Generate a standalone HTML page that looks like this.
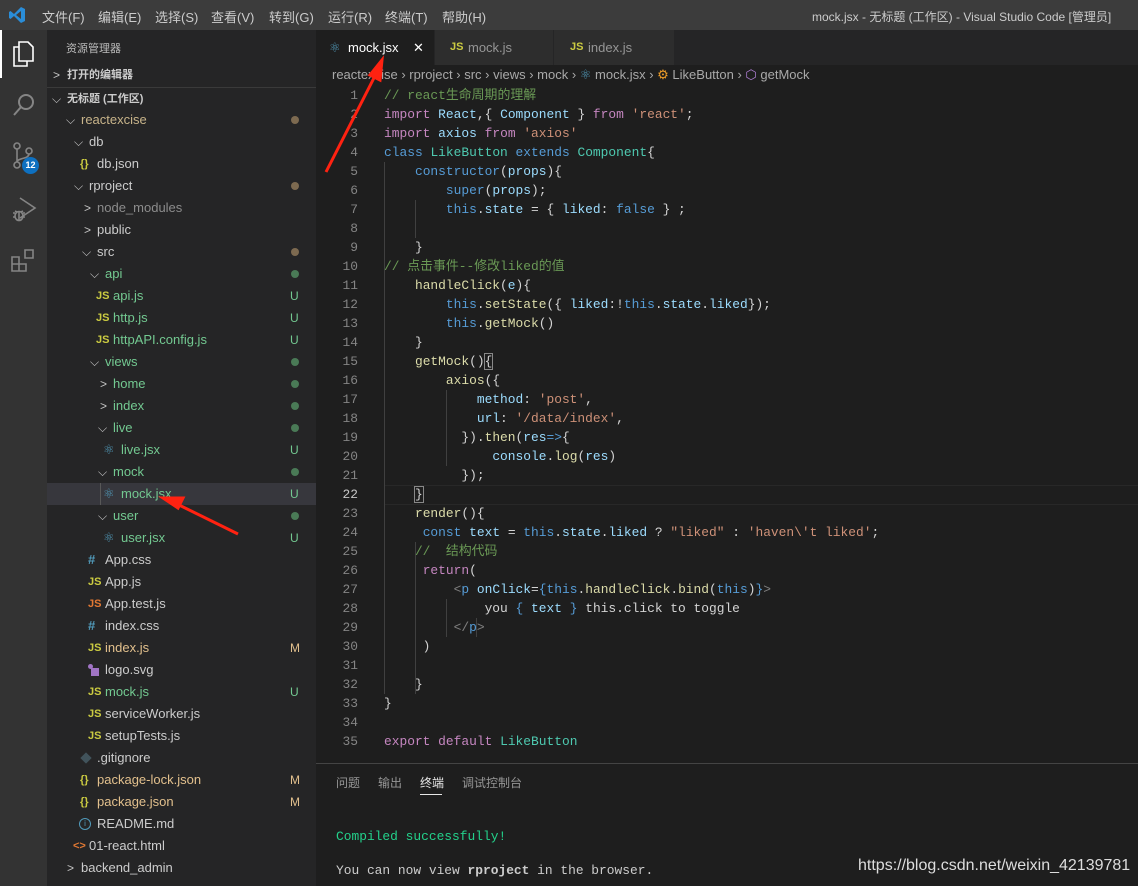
<!DOCTYPE html>
<html><head><meta charset="utf-8"><style>
*{margin:0;padding:0;box-sizing:border-box}
body{width:1138px;height:886px;overflow:hidden;background:#1e1e1e;font-family:"Liberation Sans","Noto Sans CJK SC",sans-serif;font-size:13px;color:#ccc;position:relative}
.abs{position:absolute}
#title{left:0;top:0;width:1138px;height:30px;background:#3c3c3c}
#title span{position:absolute;top:7px;font-size:13px;color:#ccc}
#act{left:0;top:30px;width:47px;height:856px;background:#333}
#side{left:47px;top:30px;width:269px;height:856px;background:#252526}
.row{position:absolute;left:47px;width:269px;height:22px;line-height:22px;white-space:nowrap}
.row .t{position:absolute;top:0}
.row .c{position:absolute;top:0;color:#c5c5c5;font-size:12px}
.row .i{position:absolute;top:0;font-size:11px;font-weight:bold}
.row .s{position:absolute;left:243px;top:0;font-size:12px}
.row .d{position:absolute;left:244px;top:7px;width:8px;height:8px;border-radius:50%}
.g{color:#73c991}.m{color:#e2c08d}.gr{color:#8c8c8c}
.dg{background:#4a7a56}.db{background:#7d6a50}
#tabs{left:316px;top:30px;width:822px;height:35px;background:#252526}
.tab{position:absolute;top:0;height:35px;line-height:35px;background:#2d2d2d;color:#969696;font-size:13px}
#code{left:316px;top:86px;font-family:"Liberation Mono","Noto Sans CJK SC",monospace;font-size:12.9px}
.ln{position:absolute;left:0;width:42px;text-align:right;color:#858585;height:19px;line-height:19px}
.cl{position:absolute;left:68px;height:19px;line-height:19px;white-space:pre;color:#d4d4d4}
.k{color:#c586c0}.v{color:#9cdcfe}.cn{color:#4ec9b0}.s1{color:#ce9178}.cm{color:#6a9955}.f{color:#dcdcaa}.b{color:#569cd6}.gy{color:#808080}
.guide{position:absolute;width:1px;background:#404040}
</style></head><body>
<div id="title" class="abs">
<svg class="abs" style="left:8px;top:6px" width="18" height="18" viewBox="0 0 18 18"><path d="M13 1L6 8 2.5 5 1 6v6l1.5 1L6 10l7 7 4-2V3z M13 5v8L8 9z" fill="#2a8dd8" fill-rule="evenodd"/></svg>
<span style="left:42px">文件(F)</span><span style="left:98px">编辑(E)</span><span style="left:155px">选择(S)</span><span style="left:211px">查看(V)</span><span style="left:269px">转到(G)</span><span style="left:328px">运行(R)</span><span style="left:385px">终端(T)</span><span style="left:442px">帮助(H)</span>
<span style="left:812px;font-size:12px;top:8px">mock.jsx - 无标题 (工作区) - Visual Studio Code [管理员]</span>
</div>
<div id="act" class="abs">
<div class="abs" style="left:0;top:0;width:2px;height:48px;background:#fff"></div>
<svg class="abs" style="left:11px;top:10px" width="26" height="28" viewBox="0 0 26 28" fill="none" stroke="#fff" stroke-width="1.6"><path d="M8 2h9l5 5v14H8z"/><path d="M8 7H3v19h13v-5"/></svg>
<svg class="abs" style="left:11px;top:62px" width="26" height="26" viewBox="0 0 26 26" fill="none" stroke="#858585" stroke-width="2"><circle cx="15" cy="10" r="7"/><path d="M10 15L3 23"/></svg>
<svg class="abs" style="left:12px;top:112px" width="24" height="28" viewBox="0 0 24 28" fill="none" stroke="#858585" stroke-width="1.6"><circle cx="5" cy="4" r="3"/><circle cx="5" cy="23" r="3"/><circle cx="17" cy="9" r="3"/><path d="M5 7v13M17 12c0 5-12 4-12 8"/></svg>
<div class="abs" style="left:22px;top:127px;width:17px;height:17px;border-radius:50%;background:#0e70c0;color:#fff;font-size:9px;line-height:17px;text-align:center;font-weight:bold">12</div>
<svg class="abs" style="left:10px;top:165px" width="28" height="28" viewBox="0 0 28 28" fill="none" stroke="#858585" stroke-width="1.6"><path d="M10 3l15 10-15 10"/><ellipse cx="9" cy="21" rx="4" ry="4.5"/><path d="M3 18h2M3 22h2M13 18h2M13 22h2M5 16l2 1M13 16l-2 1M9 17v8"/></svg>
<svg class="abs" style="left:10px;top:218px" width="26" height="26" viewBox="0 0 26 26" fill="none" stroke="#858585" stroke-width="1.6"><path d="M2 9h7v7H2zM9 16h7v7H9zM2 16h7v7H2zM15 2h8v8h-8z"/></svg>
</div>
<div id="side" class="abs"></div>
<div class="abs" style="left:66px;top:40px;font-size:11px;color:#bbb">资源管理器</div>
<div class="row" style="top:64px"><span class="c" style="left:6px">&gt;</span><span class="t" style="left:20px;font-size:11px;font-weight:bold;color:#ccc">打开的编辑器</span></div>
<div class="row" style="top:87px;border-top:1px solid #3a3a3a"><span class="c" style="left:5px">⌵</span><span class="t" style="left:20px;font-size:11px;font-weight:bold;color:#ccc">无标题 (工作区)</span></div>

<div class="row" style="top:109px"><span class="c" style="left:19px">⌵</span><span class="t" style="left:34px;color:#c8b48a">reactexcise</span><span class="d db"></span></div>
<div class="row" style="top:131px"><span class="c" style="left:27px">⌵</span><span class="t" style="left:42px">db</span></div>
<div class="row" style="top:153px"><span class="i" style="left:33px;color:#cbcb41">{}</span><span class="t" style="left:50px">db.json</span></div>
<div class="row" style="top:175px"><span class="c" style="left:27px">⌵</span><span class="t" style="left:42px">rproject</span><span class="d db"></span></div>
<div class="row" style="top:197px"><span class="c" style="left:37px">&gt;</span><span class="t gr" style="left:50px">node_modules</span></div>
<div class="row" style="top:219px"><span class="c" style="left:37px">&gt;</span><span class="t" style="left:50px">public</span></div>
<div class="row" style="top:241px"><span class="c" style="left:35px">⌵</span><span class="t" style="left:50px">src</span><span class="d db"></span></div>
<div class="row" style="top:263px"><span class="c" style="left:43px">⌵</span><span class="t g" style="left:58px">api</span><span class="d dg"></span></div>
<div class="row" style="top:285px"><span class="i" style="left:49px;color:#cbcb41">JS</span><span class="t g" style="left:66px">api.js</span><span class="s g">U</span></div>
<div class="row" style="top:307px"><span class="i" style="left:49px;color:#cbcb41">JS</span><span class="t g" style="left:66px">http.js</span><span class="s g">U</span></div>
<div class="row" style="top:329px"><span class="i" style="left:49px;color:#cbcb41">JS</span><span class="t g" style="left:66px">httpAPI.config.js</span><span class="s g">U</span></div>
<div class="row" style="top:351px"><span class="c" style="left:43px">⌵</span><span class="t g" style="left:58px">views</span><span class="d dg"></span></div>
<div class="row" style="top:373px"><span class="c" style="left:53px">&gt;</span><span class="t g" style="left:66px">home</span><span class="d dg"></span></div>
<div class="row" style="top:395px"><span class="c" style="left:53px">&gt;</span><span class="t g" style="left:66px">index</span><span class="d dg"></span></div>
<div class="row" style="top:417px"><span class="c" style="left:51px">⌵</span><span class="t g" style="left:66px">live</span><span class="d dg"></span></div>
<div class="row" style="top:439px"><span class="i" style="left:56px;color:#519aba;font-weight:normal;font-size:13px">⚛</span><span class="t g" style="left:74px">live.jsx</span><span class="s g">U</span></div>
<div class="row" style="top:461px"><span class="c" style="left:51px">⌵</span><span class="t g" style="left:66px">mock</span><span class="d dg"></span></div>
<div class="row" style="top:483px;background:#37373d"><span class="abs" style="left:53px;top:0;width:1px;height:22px;background:#585858"></span><span class="i" style="left:56px;color:#519aba;font-weight:normal;font-size:13px">⚛</span><span class="t g" style="left:74px">mock.jsx</span><span class="s g">U</span></div>
<div class="row" style="top:505px"><span class="c" style="left:51px">⌵</span><span class="t g" style="left:66px">user</span><span class="d dg"></span></div>
<div class="row" style="top:527px"><span class="i" style="left:56px;color:#519aba;font-weight:normal;font-size:13px">⚛</span><span class="t g" style="left:74px">user.jsx</span><span class="s g">U</span></div>
<div class="row" style="top:549px"><span class="i" style="left:41px;color:#519aba;font-size:13px">#</span><span class="t" style="left:58px">App.css</span></div>
<div class="row" style="top:571px"><span class="i" style="left:41px;color:#cbcb41">JS</span><span class="t" style="left:58px">App.js</span></div>
<div class="row" style="top:593px"><span class="i" style="left:41px;color:#e37933">JS</span><span class="t" style="left:58px">App.test.js</span></div>
<div class="row" style="top:615px"><span class="i" style="left:41px;color:#519aba;font-size:13px">#</span><span class="t" style="left:58px">index.css</span></div>
<div class="row" style="top:637px"><span class="i" style="left:41px;color:#cbcb41">JS</span><span class="t m" style="left:58px">index.js</span><span class="s m">M</span></div>
<div class="row" style="top:659px"><span class="abs" style="left:41px;top:5px;width:5px;height:5px;border-radius:50%;background:#a074c4"></span><span class="abs" style="left:44px;top:9px;width:8px;height:8px;background:#a074c4"></span><span class="t" style="left:58px">logo.svg</span></div>
<div class="row" style="top:681px"><span class="i" style="left:41px;color:#cbcb41">JS</span><span class="t g" style="left:58px">mock.js</span><span class="s g">U</span></div>
<div class="row" style="top:703px"><span class="i" style="left:41px;color:#cbcb41">JS</span><span class="t" style="left:58px">serviceWorker.js</span></div>
<div class="row" style="top:725px"><span class="i" style="left:41px;color:#cbcb41">JS</span><span class="t" style="left:58px">setupTests.js</span></div>
<div class="row" style="top:747px"><span class="abs" style="left:35px;top:7px;width:8px;height:8px;background:#41535b;transform:rotate(45deg)"></span><span class="t" style="left:50px">.gitignore</span></div>
<div class="row" style="top:769px"><span class="i" style="left:33px;color:#cbcb41">{}</span><span class="t m" style="left:50px">package-lock.json</span><span class="s m">M</span></div>
<div class="row" style="top:791px"><span class="i" style="left:33px;color:#cbcb41">{}</span><span class="t m" style="left:50px">package.json</span><span class="s m">M</span></div>
<div class="row" style="top:813px"><span class="abs" style="left:32px;top:5px;width:12px;height:12px;border:1.5px solid #519aba;border-radius:50%;color:#519aba;font-size:8px;line-height:9px;text-align:center">i</span><span class="t" style="left:50px">README.md</span></div>
<div class="row" style="top:835px"><span class="i" style="left:26px;color:#e37933">&lt;&gt;</span><span class="t" style="left:42px">01-react.html</span></div>
<div class="row" style="top:857px"><span class="c" style="left:20px">&gt;</span><span class="t" style="left:34px">backend_admin</span></div>

<div id="tabs" class="abs">
<div class="tab" style="left:0;width:118px;background:#1e1e1e;color:#fff"><span style="position:absolute;left:13px;color:#519aba">⚛</span><span style="position:absolute;left:32px">mock.jsx</span><span style="position:absolute;left:97px">✕</span></div>
<div class="tab" style="left:119px;width:118px"><span style="position:absolute;left:15px;color:#cbcb41;font-size:11px;font-weight:bold">JS</span><span style="position:absolute;left:33px">mock.js</span></div>
<div class="tab" style="left:238px;width:120px"><span style="position:absolute;left:16px;color:#cbcb41;font-size:11px;font-weight:bold">JS</span><span style="position:absolute;left:34px">index.js</span></div>
</div>
<div class="abs" style="left:332px;top:67px;color:#a9a9a9;font-size:13px;white-space:nowrap">reactexcise › rproject › src › views › mock › <span style="color:#519aba">⚛</span> mock.jsx › <span style="color:#ee9d28">⚙</span> LikeButton › <span style="color:#b180d7">⬡</span> getMock</div>

<div class="abs" style="left:384px;top:485px;width:754px;height:20px;border-top:1px solid #282828;border-bottom:1px solid #282828"></div>
<div class="guide" style="left:384px;top:162px;height:532px"></div>
<div class="guide" style="left:415px;top:200px;height:38px"></div>
<div class="guide" style="left:446px;top:390px;height:76px"></div>
<div class="guide" style="left:415px;top:542px;height:152px"></div>
<div class="guide" style="left:446px;top:599px;height:38px"></div>
<div class="guide" style="left:476px;top:618px;height:19px"></div>

<div id="code" class="abs">
<div class="ln" style="top:0">1</div><div class="cl cm" style="top:0">// react生命周期的理解</div>
<div class="ln" style="top:19px">2</div><div class="cl" style="top:19px"><span class="k">import</span> <span class="v">React</span>,{ <span class="v">Component</span> } <span class="k">from</span> <span class="s1">'react'</span>;</div>
<div class="ln" style="top:38px">3</div><div class="cl" style="top:38px"><span class="k">import</span> <span class="v">axios</span> <span class="k">from</span> <span class="s1">'axios'</span></div>
<div class="ln" style="top:57px">4</div><div class="cl" style="top:57px"><span class="b">class</span> <span class="cn">LikeButton</span> <span class="b">extends</span> <span class="cn">Component</span>{</div>
<div class="ln" style="top:76px">5</div><div class="cl" style="top:76px">    <span class="b">constructor</span>(<span class="v">props</span>){</div>
<div class="ln" style="top:95px">6</div><div class="cl" style="top:95px">        <span class="b">super</span>(<span class="v">props</span>);</div>
<div class="ln" style="top:114px">7</div><div class="cl" style="top:114px">        <span class="b">this</span>.<span class="v">state</span> = { <span class="v">liked</span>: <span class="b">false</span> } ;</div>
<div class="ln" style="top:133px">8</div>
<div class="ln" style="top:152px">9</div><div class="cl" style="top:152px">    }</div>
<div class="ln" style="top:171px">10</div><div class="cl cm" style="top:171px">// 点击事件--修改liked的值</div>
<div class="ln" style="top:190px">11</div><div class="cl" style="top:190px">    <span class="f">handleClick</span>(<span class="v">e</span>){</div>
<div class="ln" style="top:209px">12</div><div class="cl" style="top:209px">        <span class="b">this</span>.<span class="f">setState</span>({ <span class="v">liked</span>:!<span class="b">this</span>.<span class="v">state</span>.<span class="v">liked</span>});</div>
<div class="ln" style="top:228px">13</div><div class="cl" style="top:228px">        <span class="b">this</span>.<span class="f">getMock</span>()</div>
<div class="ln" style="top:247px">14</div><div class="cl" style="top:247px">    }</div>
<div class="ln" style="top:266px">15</div><div class="cl" style="top:266px">    <span class="f">getMock</span>()<span style="outline:1px solid #888">{</span></div>
<div class="ln" style="top:285px">16</div><div class="cl" style="top:285px">        <span class="f">axios</span>({</div>
<div class="ln" style="top:304px">17</div><div class="cl" style="top:304px">            <span class="v">method</span>: <span class="s1">'post'</span>,</div>
<div class="ln" style="top:323px">18</div><div class="cl" style="top:323px">            <span class="v">url</span>: <span class="s1">'/data/index'</span>,</div>
<div class="ln" style="top:342px">19</div><div class="cl" style="top:342px">          }).<span class="f">then</span>(<span class="v">res</span><span class="b">=&gt;</span>{</div>
<div class="ln" style="top:361px">20</div><div class="cl" style="top:361px">              <span class="v">console</span>.<span class="f">log</span>(<span class="v">res</span>)</div>
<div class="ln" style="top:380px">21</div><div class="cl" style="top:380px">          });</div>
<div class="ln" style="top:399px;color:#c6c6c6">22</div><div class="cl" style="top:399px">    <span style="outline:1px solid #888">}</span></div>
<div class="ln" style="top:418px">23</div><div class="cl" style="top:418px">    <span class="f">render</span>(){</div>
<div class="ln" style="top:437px">24</div><div class="cl" style="top:437px">     <span class="b">const</span> <span class="v">text</span> = <span class="b">this</span>.<span class="v">state</span>.<span class="v">liked</span> ? <span class="s1">"liked"</span> : <span class="s1">'haven\'t liked'</span>;</div>
<div class="ln" style="top:456px">25</div><div class="cl cm" style="top:456px">    //  结构代码</div>
<div class="ln" style="top:475px">26</div><div class="cl" style="top:475px">     <span class="k">return</span>(</div>
<div class="ln" style="top:494px">27</div><div class="cl" style="top:494px">         <span class="gy">&lt;</span><span class="b">p</span> <span class="v">onClick</span>=<span class="b">{this</span>.<span class="f">handleClick</span>.<span class="f">bind</span>(<span class="b">this</span>)<span class="b">}</span><span class="gy">&gt;</span></div>
<div class="ln" style="top:513px">28</div><div class="cl" style="top:513px">             you <span class="b">{</span> <span class="v">text</span> <span class="b">}</span> this.click to toggle</div>
<div class="ln" style="top:532px">29</div><div class="cl" style="top:532px">         <span class="gy">&lt;/</span><span class="b">p</span><span class="gy">&gt;</span></div>
<div class="ln" style="top:551px">30</div><div class="cl" style="top:551px">     )</div>
<div class="ln" style="top:570px">31</div>
<div class="ln" style="top:589px">32</div><div class="cl" style="top:589px">    }</div>
<div class="ln" style="top:608px">33</div><div class="cl" style="top:608px">}</div>
<div class="ln" style="top:627px">34</div>
<div class="ln" style="top:646px">35</div><div class="cl" style="top:646px"><span class="k">export</span> <span class="k">default</span> <span class="cn">LikeButton</span></div>
</div>

<div class="abs" style="left:316px;top:763px;width:822px;height:1px;background:#444"></div>
<div class="abs" style="left:336px;top:774px;font-size:12px;color:#969696">问题</div>
<div class="abs" style="left:378px;top:774px;font-size:12px;color:#969696">输出</div>
<div class="abs" style="left:420px;top:774px;font-size:12px;color:#e7e7e7">终端</div>
<div class="abs" style="left:420px;top:794px;width:22px;height:1px;background:#e7e7e7"></div>
<div class="abs" style="left:462px;top:774px;font-size:12px;color:#969696">调试控制台</div>
<div class="abs" style="left:336px;top:829px;font-family:'Liberation Mono',monospace;font-size:12.9px;color:#23d18b">Compiled successfully!</div>
<div class="abs" style="left:336px;top:863px;font-family:'Liberation Mono',monospace;font-size:12.9px;color:#ccc">You can now view <b>rproject</b> in the browser.</div>
<div class="abs" style="left:858px;top:857px;font-size:16px;color:#ddd">https://blog.csdn.net/weixin_42139781</div>

<svg class="abs" style="left:0;top:0" width="1138" height="886"><g stroke="#f21" stroke-width="3" fill="#f21"><path d="M326 172L377 72"/><path d="M382 60l-2 20-10-5z"/><path d="M238 534L175 503"/><path d="M163 498l20 0-5 10z"/></g></svg>
</body></html>
